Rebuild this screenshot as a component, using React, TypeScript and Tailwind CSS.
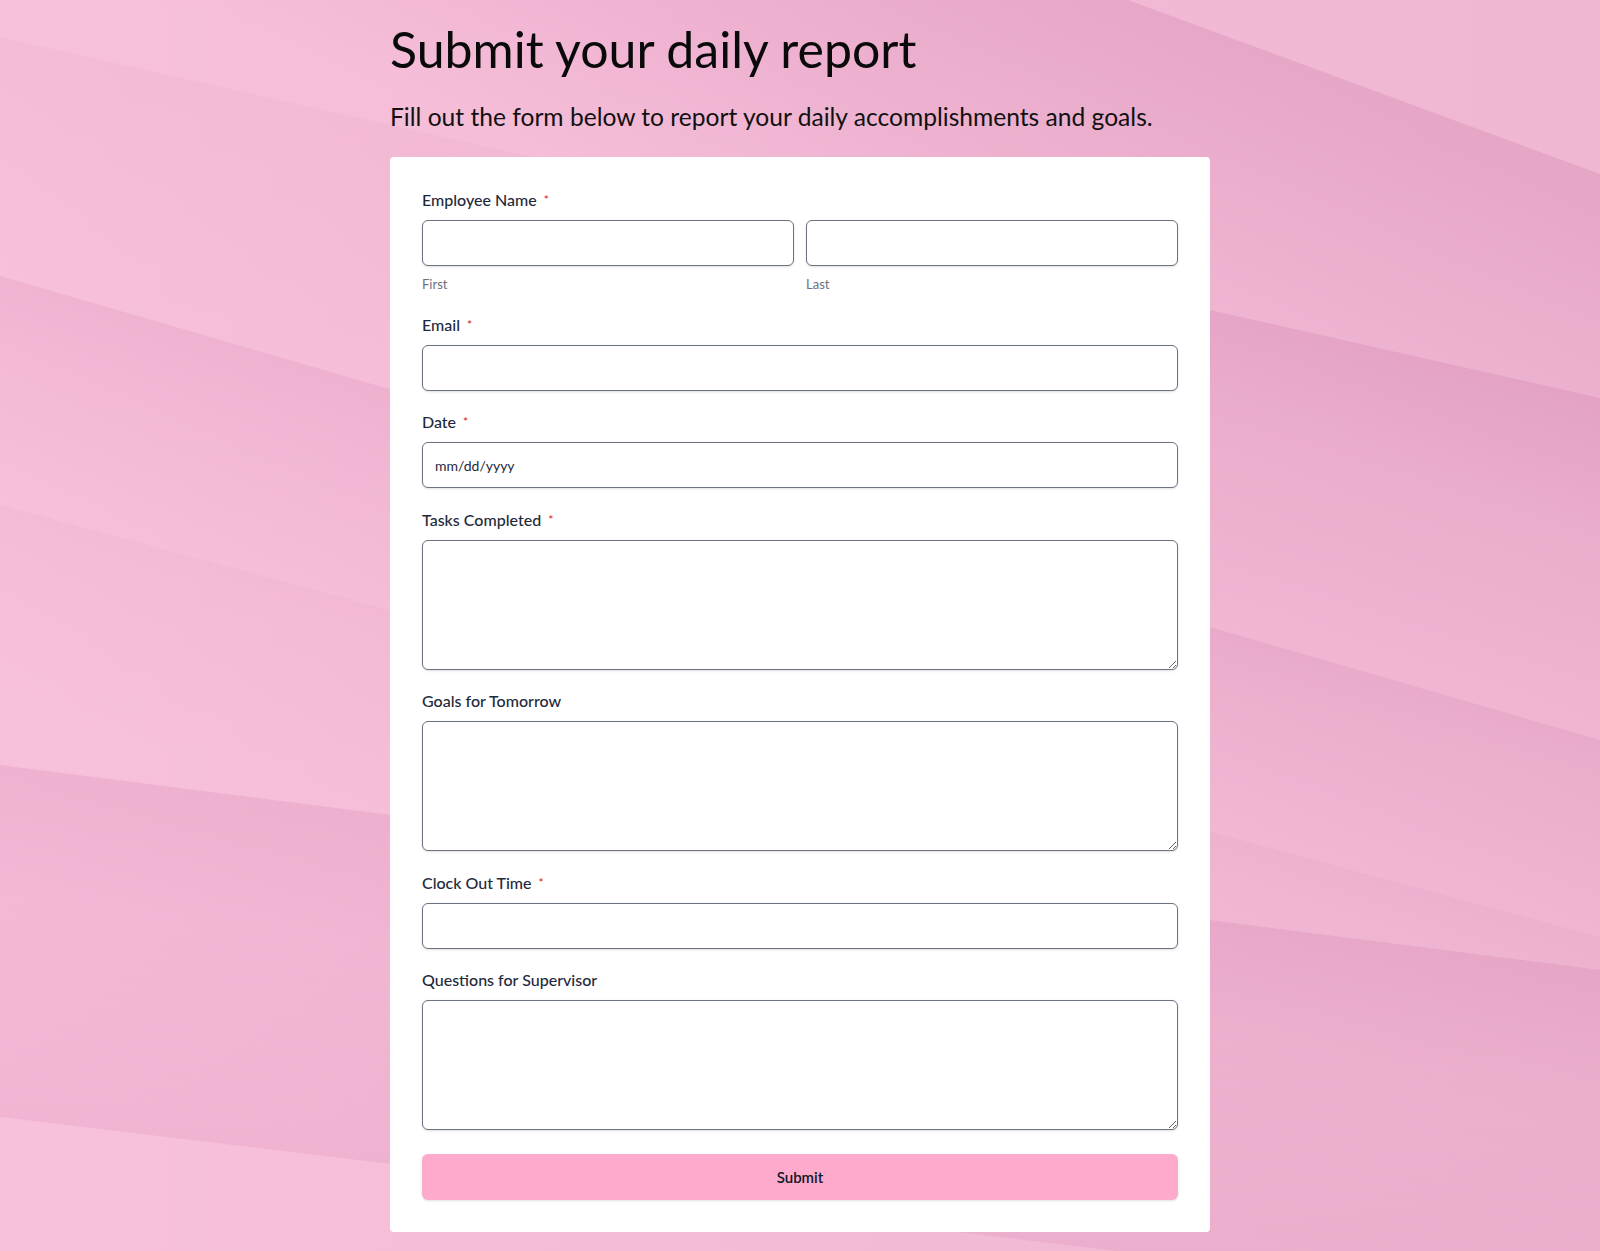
import React from "react";

type Band = {
  x0: number;
  y0: number;
  x1: number;
  y1: number;
  depth: number;
  op: number;
  up?: boolean;
  from?: number;
  to?: number;
};

// folds of the pink backdrop: each line casts a soft shade on one side
const bands: Band[] = [
  { x0: 1128, y0: 0, x1: 1600, y1: 174, depth: 340, op: 0.22 },
  { x0: 0, y0: 37, x1: 1600, y1: 398, depth: 300, op: 0.06, from: -100, to: 800 },
  { x0: 0, y0: 37, x1: 1600, y1: 398, depth: 380, op: 0.2, from: 800, to: 1700 },
  { x0: 0, y0: 276, x1: 1600, y1: 740, depth: 240, op: 0.14 },
  { x0: 0, y0: 505, x1: 1600, y1: 937, depth: 200, op: 0.06 },
  { x0: 0, y0: 765, x1: 1600, y1: 970, depth: 320, op: 0.17 },
  { x0: 0, y0: 1117, x1: 1600, y1: 1309, depth: 220, op: 0.14, up: true },
];

function geom(b: Band) {
  const dx = b.x1 - b.x0;
  const dy = b.y1 - b.y0;
  const len = Math.hypot(dx, dy);
  const ux = dx / len;
  const uy = dy / len;
  let nx = -uy;
  let ny = ux;
  if (nx > 0) {
    nx = -nx;
    ny = -ny;
  }
  if (b.up) {
    nx = -nx;
    ny = -ny;
  }
  const slope = dy / dx;
  const xa = b.from ?? -300;
  const xb = b.to ?? 1900;
  const a = [xa, b.y0 + (xa - b.x0) * slope];
  const c = [xb, b.y0 + (xb - b.x0) * slope];
  return { nx, ny, a, c };
}

function Backdrop() {
  return (
    <svg
      className="absolute inset-0 h-full w-full"
      viewBox="0 0 1600 1251"
      preserveAspectRatio="none"
      aria-hidden
    >
      <defs>
        <linearGradient id="base" x1="0" y1="0" x2="1" y2="0">
          <stop offset="0" stopColor="#f8c1db" />
          <stop offset="0.55" stopColor="#f3bad6" />
          <stop offset="1" stopColor="#f0b7d2" />
        </linearGradient>
        {bands.map((b, i) => {
          const { nx, ny } = geom(b);
          return (
            <linearGradient
              key={i}
              id={`band${i}`}
              gradientUnits="userSpaceOnUse"
              x1={b.x0}
              y1={b.y0}
              x2={b.x0 + nx * b.depth}
              y2={b.y0 + ny * b.depth}
            >
              <stop offset="0" stopColor="#c0689a" stopOpacity={b.op} />
              <stop offset="1" stopColor="#c0689a" stopOpacity={0} />
            </linearGradient>
          );
        })}
      </defs>
      <rect x="0" y="0" width="1600" height="1251" fill="url(#base)" />
      {bands.map((b, i) => {
        const { nx, ny, a, c } = geom(b);
        const pts = [
          a,
          c,
          [c[0] + nx * b.depth, c[1] + ny * b.depth],
          [a[0] + nx * b.depth, a[1] + ny * b.depth],
        ]
          .map((p) => p.join(","))
          .join(" ");
        return <polygon key={i} points={pts} fill={`url(#band${i})`} />;
      })}
    </svg>
  );
}

function Label({ text, required }: { text: string; required?: boolean }) {
  return (
    <label className="mb-[9px] flex items-center text-[16px] leading-[22px] font-medium text-[#1e293b]">
      {text}
      {required && <span className="ml-[7px] text-[12px] leading-[12px] text-[#dc2626]">*</span>}
    </label>
  );
}

const inputCls =
  "block h-[46px] w-full rounded-md border border-[#6b7280] bg-white px-3 text-[14px] text-[#1e293b] shadow-sm outline-none placeholder:text-[#1e293b]";
const areaCls =
  "block h-[130px] w-full rounded-md border border-[#6b7280] bg-white px-3 py-2 text-[14px] text-[#1e293b] shadow-sm outline-none";

export default function App() {
  return (
    <div className="relative min-h-screen overflow-hidden font-['Lato',_'Noto_Sans',_sans-serif]">
      <Backdrop />
      <div className="relative mx-auto w-[820px] pt-5 pb-[18px]">
        <h1 className="text-[50px] leading-[58px] font-normal text-[#0a0a0a]">Submit your daily report</h1>
        <p className="mt-[23px] text-[24.6px] leading-[32px] text-[#111111]">
          Fill out the form below to report your daily accomplishments and goals.
        </p>
        <form className="mt-6 rounded bg-white px-8 pt-8 pb-8" onSubmit={(e) => e.preventDefault()}>
          <div className="flex flex-col gap-[20.5px]">
            <div>
              <Label text="Employee Name" required />
              <div className="grid grid-cols-2 gap-3">
                <div>
                  <input className={inputCls} />
                  <div className="mt-[9px] text-[13px] leading-[18px] text-[#6b7280]">First</div>
                </div>
                <div>
                  <input className={inputCls} />
                  <div className="mt-[9px] text-[13px] leading-[18px] text-[#6b7280]">Last</div>
                </div>
              </div>
            </div>
            <div>
              <Label text="Email" required />
              <input type="email" className={inputCls} />
            </div>
            <div>
              <Label text="Date" required />
              <input className={inputCls} placeholder="mm/dd/yyyy" />
            </div>
            <div>
              <Label text="Tasks Completed" required />
              <textarea className={areaCls} />
            </div>
            <div>
              <Label text="Goals for Tomorrow" />
              <textarea className={areaCls} />
            </div>
            <div>
              <Label text="Clock Out Time" required />
              <input className={inputCls} />
            </div>
            <div>
              <Label text="Questions for Supervisor" />
              <textarea className={areaCls} />
            </div>
          </div>
          <button
            type="submit"
            className="mt-6 flex h-[46px] w-full items-center justify-center rounded-md bg-[#fdaacd] text-[15px] font-semibold text-[#111827] shadow-sm"
          >
            Submit
          </button>
        </form>
      </div>
    </div>
  );
}
